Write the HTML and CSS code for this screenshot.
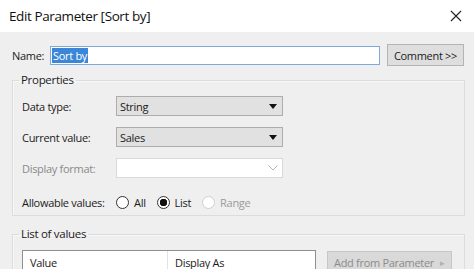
FILE: index.html
```html
<!DOCTYPE html>
<html>
<head>
<meta charset="utf-8">
<link rel="stylesheet" href="styles.css">
</head>
<body>
<div class="dialog">
  <div class="titlebar">
    <span class="title">Edit Parameter [Sort by]</span>
    <svg class="close" width="12" height="12" viewBox="0 0 12 12"><path d="M1 1 L11 11 M11 1 L1 11" stroke="#222" stroke-width="1.1" fill="none"/></svg>
  </div>
  <div class="content">
    <div class="name-row">
      <span class="lbl">Name:</span>
      <div class="name-input"><span class="sel-text">Sort by</span></div>
      <div class="btn">Comment &gt;&gt;</div>
    </div>
    <fieldset class="group props">
      <legend>Properties</legend>
      <div class="grid">
        <span class="lbl">Data type:</span>
        <div class="combo"><span>String</span><svg width="8" height="5" viewBox="0 0 8 5"><polygon points="0,0 8,0 4,5" fill="#111"/></svg></div>
        <span class="lbl">Current value:</span>
        <div class="combo"><span>Sales</span><svg width="8" height="5" viewBox="0 0 8 5"><polygon points="0,0 8,0 4,5" fill="#111"/></svg></div>
        <span class="lbl dis">Display format:</span>
        <div class="combo disabled"><span></span><svg width="10" height="6" viewBox="0 0 10 6"><path d="M0.5 0.5 L5 5 L9.5 0.5" stroke="#b5b5b5" fill="none" stroke-width="1"/></svg></div>
        <span class="lbl radio-lbl">Allowable values:</span>
        <div class="radios">
          <span class="radio"><span class="dot"></span>All</span>
          <span class="radio on"><span class="dot"></span>List</span>
          <span class="radio off"><span class="dot"></span>Range</span>
        </div>
      </div>
    </fieldset>
    <fieldset class="group list">
      <legend>List of values</legend>
      <div class="list-row">
        <div class="table">
          <div class="th c1">Value</div>
          <div class="th c2">Display As</div>
        </div>
        <div class="btn add">Add from Parameter <span class="arr">&#9656;</span></div>
      </div>
    </fieldset>
  </div>
</div>
</body>
</html>
```

FILE: styles.css
```css
html, body {
  margin: 0;
  padding: 0;
  background: #efefef;
}
body {
  width: 474px;
  height: 269px;
  overflow: hidden;
  font-family: "Open Sans", "Noto Sans", sans-serif;
  font-size: 11px;
  letter-spacing: -0.3px;
  color: #1b1b1b;
}
.titlebar {
  height: 32px;
  background: #ffffff;
  display: flex;
  align-items: center;
  justify-content: space-between;
  padding: 0 12px 0 9px;
}
.title {
  font-size: 13.5px;
  color: #111;
  letter-spacing: -0.4px;
}
.close { display: block; }
.content {
  padding: 12px 10px 0 12px;
}
.name-row {
  display: flex;
  align-items: center;
  height: 22px;
}
.name-row .lbl { width: 38px; }
.name-input {
  width: 327px;
  height: 17px;
  border: 1px solid #7ea9d9;
  background: #fff;
  display: flex;
  align-items: center;
  padding-left: 1px;
}
.sel-text {
  background: #3b86d6;
  color: #fff;
  line-height: 15px;
  padding: 0 1px;
}
.btn {
  margin-left: 7px;
  width: 75px;
  height: 20px;
  border: 1px solid #b4b4b4;
  background: #dedede;
  display: flex;
  align-items: center;
  justify-content: center;
  white-space: nowrap;
}
.group {
  margin: 0;
  border: 1px solid #dcdcdc;
  box-shadow: inset 1px 1px 0 #f8f8f8;
  padding: 0 9px;
  box-sizing: border-box;
  width: 453px;
}
.group legend {
  padding: 0 2px;
  margin-left: -3px;
  line-height: 16px;
  font-size: 11.5px;
}
.props {
  margin-top: 6px;
  padding-top: 8px;
  padding-bottom: 6px;
}
.grid {
  display: grid;
  grid-template-columns: 94px 167px;
  grid-auto-rows: 20px;
  row-gap: 11px;
  align-items: center;
}
.lbl { white-space: nowrap; }
.lbl.dis { color: #8a8a8a; }
.combo {
  height: 18px;
  border: 1px solid #adadad;
  background: #e1e1e1;
  display: flex;
  align-items: center;
  justify-content: space-between;
  padding: 0 5px 0 3px;
}
.combo.disabled {
  background: #fff;
  border-color: #d9d9d9;
  padding-right: 4px;
}
.radio-lbl, .radios { margin-top: 6px; }
.radios {
  display: flex;
  align-items: center;
  white-space: nowrap;
}
.radio {
  display: flex;
  align-items: center;
  margin-right: 11px;
}
.radio .dot {
  width: 11px;
  height: 11px;
  border: 1px solid #333;
  border-radius: 50%;
  background: #fff;
  margin-right: 5px;
  box-sizing: content-box;
}
.radio.on .dot {
  background: radial-gradient(circle, #111 0 3.5px, #fff 4px);
}
.radio.off { color: #9a9a9a; }
.radio.off .dot { border-color: #cfcfcf; }
.list {
  margin-top: 10px;
  padding-top: 8px;
  height: 60px;
}
.list-row {
  display: flex;
  align-items: flex-start;
}
.table {
  width: 292px;
  height: 40px;
  border: 1px solid #8f8f8f;
  background: #fff;
  display: flex;
}
.th {
  height: 22px;
  display: flex;
  align-items: center;
  border-bottom: 1px solid #e5e5e5;
}
.c1 {
  width: 137px;
  padding-left: 7px;
  border-right: 1px solid #e3e3e3;
}
.c2 { padding-left: 7px; flex: 1; }
.btn.add {
  margin-left: 11px;
  margin-top: 1px;
  background: #d9d9d9;
  border-color: #c6c6c6;
  color: #8c8c8c;
  justify-content: flex-start;
  padding-left: 6px;
  box-sizing: border-box;
  width: 125px;
  height: 22px;
}
.add .arr { margin-left: 6px; font-size: 9px; color: #b0b0b0; }
```
